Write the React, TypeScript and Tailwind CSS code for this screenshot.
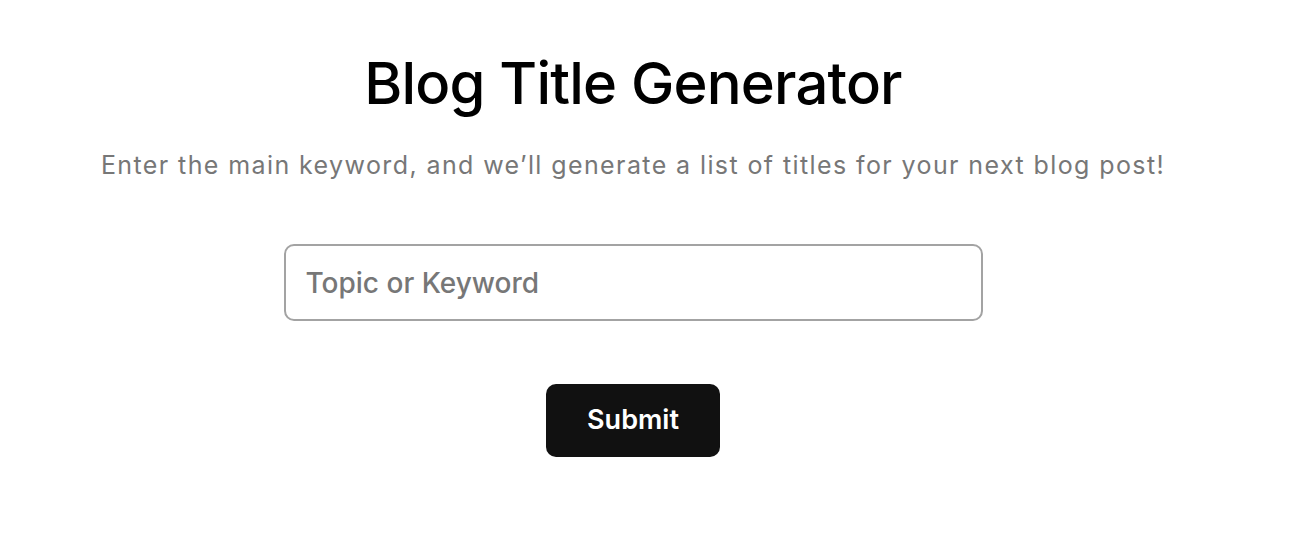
import React from "react";

export default function App() {
  return (
    <div
      className="min-h-[536px] w-full bg-white flex flex-col items-center pr-[34px]"
      style={{ fontFamily: "Inter, 'Noto Sans', sans-serif" }}
    >
      <h1 className="mt-[54px] text-[58px] leading-none font-medium text-black tracking-[-0.014em]">
        Blog Title Generator
      </h1>
      <p className="mt-[41px] text-[25px] leading-none text-[#777777] tracking-[0.056em] whitespace-nowrap">
        Enter the main keyword, and we’ll generate a list of titles for your next blog post!
      </p>
      <input
        type="text"
        placeholder="Topic or Keyword"
        className="mt-[66px] w-[699px] h-[77px] rounded-[10px] border-2 border-[#a3a3a3] px-5 text-[28px] font-medium text-black placeholder:text-[#777777] outline-none"
      />
      <button className="mt-[63px] w-[174px] h-[73px] rounded-[10px] bg-[#111111] text-white text-[27px] font-semibold">
        Submit
      </button>
    </div>
  );
}
